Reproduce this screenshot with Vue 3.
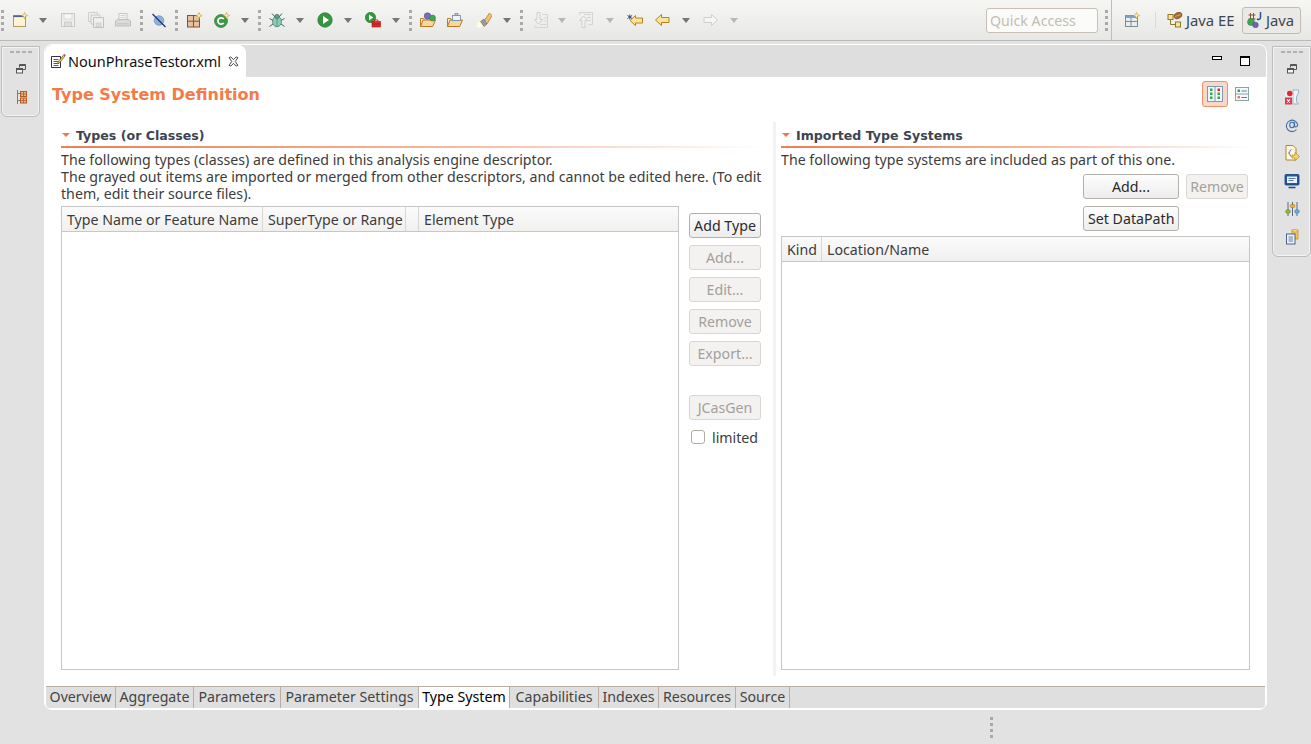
<template>
  <div class="window">
    <header class="toolbar">
      <template v-for="t in placedTools" :key="t.x">
        <span v-if="t.kind === 'grip'" class="grip" :style="{ marginLeft: t.gap + 'px' }"></span>
        <span v-else-if="t.kind === 'drop'" class="drop" :class="{ off: t.off }" :style="{ marginLeft: t.gap + 'px' }"></span>
        <svg v-else class="ico" viewBox="0 0 16 16" :style="{ marginLeft: t.gap + 'px' }" v-html="icons[t.kind]"></svg>
      </template>

      <div class="toolbar-right">
        <div class="quick">Quick Access</div>
        <span class="grip grip-right"></span>
        <span class="tb-line"></span>
        <svg class="ico open-persp" viewBox="0 0 16 16" v-html="icons.openPersp"></svg>
        <span class="tb-sep"></span>
        <svg class="ico" viewBox="0 0 16 16" v-html="icons.javaEE"></svg>
        <span class="persp persp-ee">Java EE</span>
        <div class="persp-active">
          <svg class="ico" viewBox="0 0 16 16" v-html="icons.java"></svg>
          <span class="persp">Java</span>
        </div>
      </div>
    </header>

    <div class="workbench">
      <aside class="trim trim-left">
        <span class="trim-grip"></span>
        <svg class="ico" viewBox="0 0 16 16" v-html="icons.restore"></svg>
        <svg class="ico" viewBox="0 0 16 16" v-html="icons.tree"></svg>
      </aside>

      <main class="editor">
        <div class="tabbar">
          <div class="tab">
            <svg class="ico" viewBox="0 0 16 16" v-html="icons.xmlFile"></svg>
            <span class="tab-name">NounPhraseTestor.xml</span>
            <svg class="tab-close" viewBox="0 0 10 10">
              <path d="M1 1.5 2.5 0.8 5 3.3 7.5 0.8 9 1.5 6.6 5 9 8.5 7.5 9.2 5 6.7 2.5 9.2 1 8.5 3.4 5Z" fill="#fff" stroke="#444" stroke-width="0.9" />
            </svg>
          </div>
          <div class="view-btns">
            <span class="min-btn"></span>
            <span class="max-btn"></span>
          </div>
        </div>

        <div class="form">
          <div class="form-head">
            <h1>Type System Definition</h1>
            <div class="form-tools">
              <span class="form-tool active">
                <svg class="ico" viewBox="0 0 16 16" v-html="icons.layoutColumns"></svg>
              </span>
              <span class="form-tool">
                <svg class="ico" viewBox="0 0 16 16" v-html="icons.layoutRows"></svg>
              </span>
            </div>
          </div>

          <div class="form-body">
            <section class="left">
              <div class="sec-head"><i class="twist"></i>Types (or Classes)</div>
              <p class="desc">
                The following types (classes) are defined in this analysis engine descriptor.<br />
                The grayed out items are imported or merged from other descriptors, and cannot be edited here. (To edit<br />
                them, edit their source files).
              </p>
              <div class="left-row">
                <div class="table">
                  <div class="thead">
                    <span class="th" style="width: 201px">Type Name or Feature Name</span>
                    <span class="th" style="width: 143px">SuperType or Range</span>
                    <span class="th" style="width: 13px"></span>
                    <span class="th last">Element Type</span>
                  </div>
                </div>
                <div class="btn-col">
                  <button class="btn">Add Type</button>
                  <button class="btn" disabled>Add...</button>
                  <button class="btn" disabled>Edit...</button>
                  <button class="btn" disabled>Remove</button>
                  <button class="btn" disabled>Export...</button>
                  <button class="btn jcas" disabled>JCasGen</button>
                  <label class="check"><span class="box"></span>limited</label>
                </div>
              </div>
            </section>

            <div class="sash"></div>

            <section class="right">
              <div class="sec-head"><i class="twist"></i>Imported Type Systems</div>
              <p class="desc">The following type systems are included as part of this one.</p>
              <div class="right-btns">
                <button class="btn wide">Add...</button>
                <button class="btn narrow" disabled>Remove</button>
              </div>
              <div class="right-btns second">
                <button class="btn wide clip"><span>Set DataPath</span></button>
              </div>
              <div class="table">
                <div class="thead">
                  <span class="th" style="width: 40px">Kind</span>
                  <span class="th last">Location/Name</span>
                </div>
              </div>
            </section>
          </div>
        </div>

        <nav class="pages">
          <span
            v-for="p in pages"
            :key="p.name"
            class="page"
            :class="{ on: p.on }"
            :style="{ width: p.w + 'px' }"
          >{{ p.name }}</span>
        </nav>
      </main>

      <aside class="trim trim-right">
        <span class="trim-grip"></span>
        <svg v-for="n in rightTrim" :key="n" class="ico" viewBox="0 0 16 16" v-html="icons[n]"></svg>
      </aside>
    </div>

    <footer class="status"><span class="grip"></span></footer>
  </div>
</template>

<script setup>
const star = (x, y) =>
  `<path d="M${x} ${y - 3.2}l.9 2.3 2.3.9-2.3.9-.9 2.3-.9-2.3-2.3-.9 2.3-.9z" fill="#fff2a8" stroke="#c09a30" stroke-width=".6"/>`;

const icons = {
  newWin: `<rect x="1.5" y="3.5" width="12" height="11" fill="#fdf5d6" stroke="#b09a62"/><rect x="1.5" y="3.5" width="12" height="1.6" fill="#4f5f88"/>${star(12.5, 3.6)}`,
  save: `<path d="M1.5 1.5h13v13h-13z" fill="#efefef" stroke="#c8c8c8"/><rect x="4" y="2" width="8" height="5" fill="#f8f8f8" stroke="#d0d0d0" stroke-width=".7"/><rect x="4.5" y="10" width="7" height="4.5" fill="#ddd" stroke="#c4c4c4" stroke-width=".7"/>`,
  saveAll: `<path d="M.5 .5h9v9h-9z" fill="#efefef" stroke="#d0d0d0"/><path d="M3 3h9v9h-9z" fill="#efefef" stroke="#cacaca"/><path d="M5.5 5.5h10v10h-10z" fill="#efefef" stroke="#c0c0c0"/><rect x="8" y="11" width="5" height="4" fill="#ddd" stroke="#c4c4c4" stroke-width=".6"/>`,
  print: `<rect x="4" y="1.5" width="8" height="6.5" fill="#f4f4f4" stroke="#c8c8c8"/><path d="M5.5 3.5h5M5.5 5.5h5" stroke="#d4d4d4"/><path d="M.5 9 3 7.5h10L15.5 9v5H.5z" fill="#dcdcdc" stroke="#bdbdbd"/><rect x="2.5" y="11" width="11" height="1.5" fill="#c8c8c8"/>`,
  skip: `<circle cx="8" cy="8.5" r="4.8" fill="#8fb1d6" stroke="#5d84b0" stroke-width=".6"/><path d="M1.5 2 14.5 15" stroke="#1e2f7c" stroke-width="1.3"/>`,
  newType: `<rect x="1.5" y="3.5" width="12" height="11.5" fill="#e6c2a4" stroke="#8a4f32"/><path d="M1.5 9.2h12M7.5 3.5v11.5" stroke="#8a4f32"/>${star(13, 3.7)}`,
  newClass: `<circle cx="7" cy="9" r="6.5" fill="#3c9a46" stroke="#2b6e33" stroke-width=".6"/><path d="M9.7 7A3.2 3.2 0 1 0 9.7 11" fill="none" stroke="#fff" stroke-width="1.8"/>${star(12.5, 3.6)}`,
  debug: `<path d="M3 1.5 6 5M13 1.5 10 5M.5 6.5l3.5 2M15.5 6.5l-3.5 2M.5 14.5l4-3M15.500 14.5l-4-3" stroke="#3e4c54" stroke-width=".9"/><ellipse cx="8" cy="9.5" rx="4.5" ry="5.3" fill="#8cc9b4" stroke="#3e7c6c" stroke-width=".7"/><circle cx="8" cy="4.5" r="2.2" fill="#5f9e8e" stroke="#3e6c5c" stroke-width=".6"/><path d="M8 5.5v9.3" stroke="#3e7c6c" stroke-width=".6"/>`,
  run: `<circle cx="8" cy="8" r="7.2" fill="#35963f" stroke="#25752e" stroke-width=".7"/><path d="M6 4 12 8 6 12z" fill="#fff"/>`,
  runExt: `<circle cx="5.5" cy="5.5" r="5.2" fill="#35963f" stroke="#25752e" stroke-width=".6"/><path d="M4 2.6 8.2 5.5 4 8.4z" fill="#fff"/><rect x="7" y="9.5" width="8.5" height="5.5" fill="#dd2a2a" stroke="#a81818" stroke-width=".6"/><path d="M9.5 9.5V8h3.5v1.5M7 12h8.5" fill="none" stroke="#a81818" stroke-width=".8"/>`,
  openType: `<path d="M.5 14.5 3 8h12.5l-2.800 6.5z" fill="#f8d79a" stroke="#b87a28"/><path d="M.5 14.5V6.5h3l1 1.5" fill="none" stroke="#b87a28"/><circle cx="7.5" cy="4" r="3.3" fill="#7b6cb8" stroke="#54488e" stroke-width=".5"/><circle cx="12.5" cy="6" r="3" fill="#3fa652" stroke="#2a7a3a" stroke-width=".5"/>`,
  openTask: `<path d="M.5 14.5 3 8h12.5l-2.800 6.5z" fill="#f8d79a" stroke="#b87a28"/><path d="M.5 14.5V6.5h3l1 1.5" fill="none" stroke="#b87a28"/><rect x="5.5" y="3.5" width="8" height="5" fill="#eef3fa" stroke="#6d86aa" stroke-width=".8"/><rect x="8" y="1.5" width="3" height="2" fill="#b8c6da" stroke="#6d86aa" stroke-width=".7"/>`,
  torch: `<path d="M0 15.5 1 11 4.500 8.500 9 14 5 16z" fill="#fffde4" stroke="#f2eab4" stroke-width=".5"/><path d="M8 9 13.5 1 16 3.500 11 12z" fill="#f2c26f" stroke="#b87a28" stroke-width=".8"/><path d="M4.500 9.500 8 7 11 12 8 14.500z" fill="#9a9a9a" stroke="#6d6d6d" stroke-width=".6"/>`,
  nextAnno: `<path d="M7 .5v7h2.5L5.5 12 1.5 7.5H4v-7z" fill="#f2f2f2" stroke="#cfcfcf"/><path d="M9.5 2.5h5v13H2v-2M10.5 6h3M10.5 9h3M7 12.5h6.5" fill="none" stroke="#d4d4d4"/>`,
  prevAnno: `<path d="M7 15.5v-7h2.5L5.5 4 1.5 8.5H4v7z" fill="#f2f2f2" stroke="#cfcfcf"/><path d="M1.5 3V.5h13v12h-4M6 2.5h7M9 5.5h4M10 8.5h3" fill="none" stroke="#d4d4d4"/>`,
  lastEdit: `<path d="M3 8.5 8.5 3.5V6H15.5V11H8.5V13.5z" fill="#fbe39a" stroke="#b98220"/><path d="M2.8 2.5v5M.5 3.5l4.600 3M5.100 3.5.5 6.500" stroke="#2a4f9c" stroke-width="1"/>`,
  back: `<path d="M1.5 8 7.5 2.5V5.500H15V10.500H7.5V13.5z" fill="#fbe39a" stroke="#b98220"/>`,
  forward: `<path d="M14.5 8 8.5 2.5V5.500H1V10.500H8.5V13.5z" fill="#f6f6f6" stroke="#cfcfcf"/>`,
  openPersp: `<rect x="1.5" y="3.5" width="12" height="11" fill="#e8eef0" stroke="#7c8f8c"/><rect x="1.5" y="3.5" width="12" height="2.5" fill="#79a3cc"/><path d="M1.5 9.5h12M7 6v8.5" stroke="#7c8f8c"/>${star(12.5, 3.6)}`,
  javaEE: `<rect x="1" y="2.5" width="5" height="5" fill="#fbe39a" stroke="#8a7a2a"/><rect x="8.5" y="10" width="5" height="5" fill="#fbe39a" stroke="#8a7a2a"/><path d="M3.5 7.5V12.5H8.5" fill="none" stroke="#8a7a2a"/><ellipse cx="11" cy="3.5" rx="4.2" ry="3" transform="rotate(-25 11 3.5)" fill="#a8672f" stroke="#6f4320" stroke-width=".5"/><path d="M8 4.5 14 2.5" stroke="#e8c498" stroke-width=".7"/>`,
  java: `<path d="M1.5 3h7M1.5 7h7M3.5 1v8M6.5 1v8" stroke="#8a5232" stroke-width="1"/><path d="M13.5 0v5.5c0 2-2 2.3-3.5 1.5" fill="none" stroke="#2a4f9c" stroke-width="1.5"/><circle cx="4" cy="10" r="3.5" fill="#3fa652" stroke="#2a7a3a" stroke-width=".5"/><circle cx="8.5" cy="13" r="2.8" fill="#7064b4" stroke="#4b418c" stroke-width=".5"/>`,
  restore: `<path d="M6.5 6.5v-3h6v5H10" fill="none" stroke="#555" stroke-width="1"/><path d="M6.5 4.5h6" stroke="#555" stroke-width="1"/><rect x="3.5" y="7.5" width="6" height="4.5" fill="#f4f4f4" stroke="#555" stroke-width="1"/><path d="M3.5 8.5h6" stroke="#555" stroke-width="1"/>`,
  tree: `<path d="M4.5 1v14M4.5 4.5h3M4.5 11.5h3" stroke="#7c7c7c"/><rect x="7.5" y="2.5" width="6" height="5" fill="#e8b884" stroke="#b25a2a"/><rect x="7.5" y="9" width="6" height="5" fill="#e8b884" stroke="#b25a2a"/><path d="M10.5 2.5v5M7.5 5h6M10.5 9v5M7.5 11.5h6" stroke="#b25a2a" stroke-width=".8"/>`,
  markers: `<path d="M9 1h5.5v2.5L12.5 8v5l2 2H9z" fill="#eef3f8" stroke="#8ea4bd" stroke-width=".8"/><rect x="1" y="3" width="8" height="5.5" fill="#f0eaea"/><circle cx="5.8" cy="4.5" r="2.8" fill="#e0262e"/><rect x="1" y="8.5" width="7" height="7" fill="#d83a50"/><path d="M3 10.5l3 3M6 10.5l-3 3" stroke="#fff" stroke-width="1.2"/>`,
  at: `<path d="M12.5 12.5A5.700 5.700 0 1 1 13.700 8C13.700 10 11 10.500 10.500 9" fill="none" stroke="#3f6fa8" stroke-width="1.100"/><ellipse cx="8" cy="8" rx="2.300" ry="2.700" fill="none" stroke="#3f6fa8" stroke-width="1.100"/><path d="M10.500 5.200v4" stroke="#3f6fa8" stroke-width="1.100"/>`,
  declaration: `<path d="M2 .5h7l3 3v11.5H2z" fill="#fff8e0" stroke="#a88a30"/><path d="M7.5 4.5C5.5 4.5 6.5 8 4.5 8 6.5 8 5.5 11.5 7.5 11.5" fill="none" stroke="#5a6aa0"/><path d="M8 10h3V7.5l4.5 4-4.5 4V13H8z" fill="#fbd35e" stroke="#b98220" stroke-width=".7"/>`,
  console: `<rect x="1" y="1.5" width="14" height="10.5" rx="1" fill="#1f5aa6" stroke="#143d75" stroke-width=".8"/><rect x="3" y="3.5" width="10" height="6.5" fill="#e8f0f8"/><path d="M4.5 5.5h7M4.5 7.5h5" stroke="#5a7aa0"/><path d="M4.5 14.5h7" stroke="#1f4a86" stroke-width="1.5"/>`,
  tune: `<path d="M4 1v14M8.5 1v14M13 1v14" stroke="#5a6a8a"/><rect x="1.8" y="9" width="4.4" height="3" rx="1" fill="#8cc63f" stroke="#587a20" stroke-width=".6"/><rect x="6.3" y="3.5" width="4.4" height="3" rx="1" fill="#f0b429" stroke="#a87a10" stroke-width=".6"/><rect x="10.8" y="9" width="4.4" height="3" rx="1" fill="#6fb0e0" stroke="#3a7aa8" stroke-width=".6"/>`,
  snippets: `<rect x="8" y="1" width="6" height="9" fill="#f2c94c" stroke="#b98a20" stroke-width=".7"/><ellipse cx="11" cy="1.8" rx="3" ry="1.2" fill="#fbe39a" stroke="#b98a20" stroke-width=".6"/><rect x="2.5" y="5" width="8.5" height="10" fill="#eef3f8" stroke="#47608a"/><path d="M4.5 8h4.5M4.5 10h4.5M4.5 12h4.5" stroke="#47608a" stroke-width=".8"/>`,
  xmlFile: `<path d="M1.5 3.5h9v11h-9z" fill="#fff" stroke="#2b2b5e"/><path d="M3.5 6.5h5M3.5 8.5h5M3.5 10.5h5M3.5 12.5h5" stroke="#2b2b5e" stroke-width=".8"/><path d="M8 9 14 1.5l1.3 1L9.5 10 7.8 10.8z" fill="#f4d03f" stroke="#4a3a10" stroke-width=".6"/><path d="M13.5 2 14.3 1l1.2 1-.8 1z" fill="#c8388c"/>`,
  layoutColumns: `<rect x=".5" y=".5" width="15" height="15" fill="#f4f8fb" stroke="#8596ad"/><path d="M8 .5v15" stroke="#8596ad"/><path d="M3 2.5h2.5V5H3zM3 6.5h2.5V9H3zM3 10.5h2.5V13H3zM10.5 6.5H13V9h-2.5zM10.5 10.5H13V13h-2.5z" fill="#30a850"/><path d="M10.5 2.5H13V5h-2.5z" fill="#e0262e"/>`,
  layoutRows: `<rect x="1.5" y="1.5" width="13" height="13" fill="#f4f8fb" stroke="#8ea2a8"/><path d="M1.5 8h13" stroke="#8ea2a8"/><path d="M3.5 3.5h2.5V6H3.5z" fill="#30a850"/><path d="M3.5 10h2.5v2.5H3.5z" fill="#e87a6a"/><path d="M7.5 5h5.5M7.5 11.5h5.5" stroke="#5c80a8"/>`,
};

const rawTools = [
  { kind: "grip", x: 2 }, { kind: "newWin", x: 20 }, { kind: "drop", x: 43 },
  { kind: "save", x: 68 }, { kind: "saveAll", x: 96 }, { kind: "print", x: 123 },
  { kind: "grip", x: 141 }, { kind: "skip", x: 159 },
  { kind: "grip", x: 176 }, { kind: "newType", x: 194 }, { kind: "newClass", x: 222 }, { kind: "drop", x: 245 },
  { kind: "grip", x: 259 }, { kind: "debug", x: 277 }, { kind: "drop", x: 300 },
  { kind: "run", x: 325 }, { kind: "drop", x: 348 }, { kind: "runExt", x: 373 }, { kind: "drop", x: 396 },
  { kind: "grip", x: 410 }, { kind: "openType", x: 428 }, { kind: "openTask", x: 455 }, { kind: "torch", x: 484 }, { kind: "drop", x: 507 },
  { kind: "grip", x: 521 }, { kind: "nextAnno", x: 541 }, { kind: "drop", x: 562, off: true },
  { kind: "prevAnno", x: 586 }, { kind: "drop", x: 610, off: true },
  { kind: "lastEdit", x: 635 }, { kind: "back", x: 662 }, { kind: "drop", x: 686 },
  { kind: "forward", x: 711 }, { kind: "drop", x: 734, off: true },
];

// gaps between toolbar items come from each item's centre
const widthOf = (t) => (t.kind === "grip" ? 3 : t.kind === "drop" ? 8 : 16);
let right = 0;
const placedTools = rawTools.map((t) => {
  const w = widthOf(t);
  const gap = t.x - w / 2 - right;
  right = t.x + w / 2;
  return { ...t, gap };
});

const rightTrim = ["restore", "markers", "at", "declaration", "console", "tune", "snippets"];

const pages = [
  { name: "Overview", w: 70 },
  { name: "Aggregate", w: 78 },
  { name: "Parameters", w: 87 },
  { name: "Parameter Settings", w: 138 },
  { name: "Type System", w: 91, on: true },
  { name: "Capabilities", w: 89 },
  { name: "Indexes", w: 60 },
  { name: "Resources", w: 77 },
  { name: "Source", w: 54 },
];
</script>

<style>
html,
body {
  margin: 0;
  overflow: hidden;
}
</style>

<style scoped>
.window {
  width: 1311px;
  height: 744px;
  display: flex;
  flex-direction: column;
  background: #e2e2e2;
  font-family: "Noto Sans", sans-serif;
  font-size: 14.2px;
  color: #3c3c3c;
  overflow: hidden;
}

.ico {
  width: 16px;
  height: 16px;
  flex: none;
  display: block;
}

/* main toolbar */
.toolbar {
  height: 41px;
  box-sizing: border-box;
  flex: none;
  display: flex;
  align-items: center;
  background: linear-gradient(#f6f6f5, #e7e7e6);
  border-bottom: 1px solid #b9b9b7;
}

.grip {
  width: 3px;
  height: 21px;
  flex: none;
  background: repeating-linear-gradient(#a9a9a9 0 3px, transparent 3px 6px);
}

.drop {
  width: 0;
  height: 0;
  flex: none;
  margin-top: 1px;
  border-left: 4px solid transparent;
  border-right: 4px solid transparent;
  border-top: 5px solid #757575;
}

.drop.off {
  border-top-color: #b8b8b8;
}

.toolbar-right {
  margin-left: auto;
  display: flex;
  align-items: center;
  height: 100%;
  padding-right: 10px;
}

.quick {
  width: 112px;
  height: 25px;
  box-sizing: border-box;
  border: 1px solid #c8c0b4;
  border-radius: 3px;
  background: #fbfbfa;
  color: #c4bdb3;
  line-height: 23px;
  padding-left: 3px;
}

.grip-right {
  margin-left: 7px;
}

.tb-line {
  width: 1px;
  height: 40px;
  margin-left: 3px;
  background: #bdbdbb;
}

.open-persp {
  margin-left: 12px;
}

.tb-sep {
  width: 1px;
  height: 16px;
  margin: 0 11px 0 15px;
  background: #dadad8;
}

.persp {
  margin-left: 3px;
  font-size: 14.8px;
  color: #3f4650;
}

.persp-ee {
  width: 49px;
  white-space: nowrap;
}

.persp-active {
  display: flex;
  align-items: center;
  width: 59px;
  height: 27px;
  box-sizing: border-box;
  margin-left: 7px;
  padding-left: 4px;
  border: 1px solid #c4bcb0;
  border-radius: 3px;
  background: #ebe9e6;
}

/* workbench */
.workbench {
  height: 669px;
  flex: none;
  display: flex;
  align-items: flex-start;
  padding: 3px 0 0 1px;
  box-sizing: border-box;
}

.trim {
  width: 39px;
  box-sizing: border-box;
  margin-top: 2px;
  display: flex;
  flex-direction: column;
  align-items: center;
  border: 1px solid #bcbcbc;
  border-radius: 0 0 6px 6px;
  box-shadow: inset 0 0 0 1px #f4f4f4;
  background: #e2e2e2;
}

.trim-left {
  height: 71px;
  gap: 12px;
}

.trim-right {
  height: 211px;
  margin-left: 5px;
  gap: 12px;
}

.trim-grip {
  width: 22px;
  height: 2px;
  margin-top: 4px;
  margin-bottom: -4px;
  background: repeating-linear-gradient(90deg, #b0b0b0 0 4px, transparent 4px 6px);
}

/* editor */
.editor {
  width: 1223px;
  height: 666px;
  margin-left: 4px;
  box-sizing: border-box;
  display: flex;
  flex-direction: column;
  background: #fff;
  border: 1px solid #fff;
  border-radius: 8px;
  overflow: hidden;
}

.tabbar {
  height: 32px;
  flex: none;
  display: flex;
  justify-content: space-between;
  background: #dedede;
}

.tab {
  width: 201px;
  box-sizing: border-box;
  display: flex;
  align-items: center;
  padding-left: 5px;
  background: #fff;
  border-radius: 8px 8px 0 0;
  color: #111;
}

.tab-name {
  margin-left: 2px;
  font-size: 14.5px;
}

.tab-close {
  width: 11px;
  height: 11px;
  margin-left: auto;
  margin-right: 7px;
}

.view-btns {
  display: flex;
  align-items: center;
  margin-right: 16px;
}

.min-btn {
  width: 10px;
  height: 4px;
  box-sizing: border-box;
  border: 1px solid #000;
  background: #fff;
  margin-right: 18px;
  margin-top: -6px;
}

.max-btn {
  width: 10px;
  height: 10px;
  box-sizing: border-box;
  border: 1px solid #000;
  border-top-width: 2px;
  background: #fff;
}

.form {
  flex: 1;
  min-height: 0;
  display: flex;
  flex-direction: column;
}

.form-head {
  height: 34px;
  flex: none;
  display: flex;
  align-items: center;
  justify-content: space-between;
  padding: 0 11px 0 7px;
}

h1 {
  margin: 0;
  font-family: "DejaVu Sans", sans-serif;
  font-size: 16px;
  font-weight: 700;
  color: #f47b48;
}

.form-tools {
  display: flex;
  align-items: center;
  gap: 1px;
}

.form-tool {
  width: 26px;
  height: 26px;
  box-sizing: border-box;
  display: flex;
  align-items: center;
  justify-content: center;
  border: 1px solid transparent;
  border-radius: 3px;
}

.form-tool.active {
  border-color: #ef9068;
  background: #f5d9cc;
}

.form-body {
  flex: 1;
  min-height: 0;
  display: flex;
  padding: 11px 16px 10px 16px;
}

.left {
  width: 702px;
  display: flex;
  flex-direction: column;
  padding-bottom: 6px;
  box-sizing: border-box;
}

.right {
  width: 469px;
  display: flex;
  flex-direction: column;
  padding-bottom: 6px;
  box-sizing: border-box;
}

.sash {
  width: 3px;
  margin: 0 5px 0 10px;
  background: #f3f3f3;
}

.sec-head {
  height: 26px;
  flex: none;
  display: flex;
  align-items: center;
  box-sizing: border-box;
  padding-top: 2px;
  font-family: "DejaVu Sans", sans-serif;
  font-size: 12.6px;
  font-weight: 700;
  color: #3d4450;
  border-bottom: 2px solid;
  border-image: linear-gradient(90deg, #ea7f52, #f5b89e 55%, #ffffff) 1;
}

.twist {
  width: 0;
  height: 0;
  margin: 0 6px 0 1px;
  border-left: 4px solid transparent;
  border-right: 4px solid transparent;
  border-top: 4px solid #ec7a4c;
}

.desc {
  margin: 3px 0 4px;
  line-height: 17px;
  white-space: nowrap;
  color: #3c3c3c;
}

.left-row {
  flex: 1;
  min-height: 0;
  display: flex;
}

.table {
  flex: 1;
  border: 1px solid #c8c6c4;
  background: #fff;
}

.left-row .table {
  flex: none;
  width: 618px;
  box-sizing: border-box;
}

.thead {
  height: 25px;
  box-sizing: border-box;
  display: flex;
  background: linear-gradient(#fbfbfb, #f1f0ef);
  border-bottom: 1px solid #c9c7c5;
}

.th {
  box-sizing: border-box;
  padding-left: 5px;
  line-height: 26px;
  border-right: 1px solid #d9d7d5;
  white-space: nowrap;
  overflow: hidden;
}

.th.last {
  border-right: 0;
  flex: 1;
}

.btn-col {
  width: 72px;
  margin-left: 10px;
  padding-top: 7px;
  display: flex;
  flex-direction: column;
  gap: 7px;
}

.btn {
  height: 25px;
  padding: 0;
  box-sizing: border-box;
  font: inherit;
  color: #2a2a2a;
  border: 1px solid #b4b0aa;
  border-radius: 3px;
  background: linear-gradient(#fdfdfd, #eeeded);
  white-space: nowrap;
  overflow: hidden;
}

.btn:disabled {
  color: #a3a09c;
  border-color: #dad7d3;
  background: #f3f2f0;
}

.jcas {
  margin-top: 22px;
}

.check {
  display: flex;
  align-items: center;
  height: 20px;
  color: #3c3c3c;
}

.box {
  width: 14px;
  height: 14px;
  box-sizing: border-box;
  margin: 0 7px 0 2px;
  border: 1px solid #b0aca6;
  border-radius: 3px;
  background: #fff;
}

.right-btns {
  display: flex;
  margin: 2px 0 0 302px;
  gap: 7px;
}

.right-btns.second {
  margin-top: 7px;
  margin-bottom: 5px;
}

.wide {
  width: 96px;
}

.narrow {
  width: 62px;
}

.clip span {
  display: block;
  margin: 0 4px;
  text-align: left;
  overflow: hidden;
}

/* form pages at the bottom */
.pages {
  height: 22px;
  flex: none;
  display: flex;
  margin: 0 1px 1px;
  background: #dfdfdf;
  border-top: 1px solid #b8aea6;
  box-sizing: border-box;
}

.page {
  box-sizing: border-box;
  text-align: center;
  line-height: 20px;
  border-right: 1px solid #b8aea6;
  color: #444;
  white-space: nowrap;
}

.page.on {
  background: #fff;
  color: #000;
}

.status {
  flex: 1;
  display: flex;
  align-items: center;
  padding-left: 990px;
}
</style>
